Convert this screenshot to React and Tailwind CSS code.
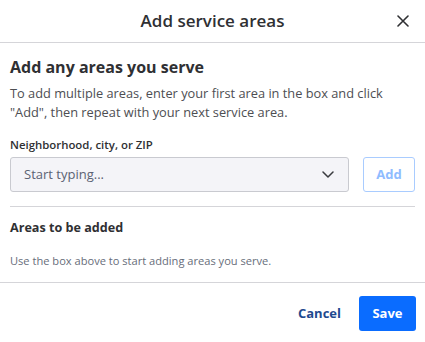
import React from "react";

export default function App() {
  return (
    <div className="w-[425px] h-[342px] bg-white text-[#2f3033] flex flex-col" style={{ fontFamily: '"Open Sans", sans-serif' }}>
      <div className="relative h-[43px] flex items-center justify-center border-b border-[#d5d5d9] shrink-0">
        <span className="text-[17px] font-semibold text-[#2f3033]">Add service areas</span>
        <button className="absolute right-[14px] top-[13px] w-[16px] h-[16px] flex items-center justify-center">
          <svg width="12" height="12" viewBox="0 0 12 12" fill="none" stroke="#2f3033" strokeWidth="1.6" strokeLinecap="round">
            <path d="M1 1L11 11M11 1L1 11" />
          </svg>
        </button>
      </div>
      <div className="px-[10px] pt-[13px] flex flex-col">
        <h2 className="text-[16px] font-bold leading-[22px] text-[#2f3033]">Add any areas you serve</h2>
        <p className="mt-[6px] text-[12.8px] leading-[19px] text-[#4d4e52]">
          To add multiple areas, enter your first area in the box and click "Add", then repeat with your next service area.
        </p>
        <label className="mt-[15px] text-[11.4px] font-semibold leading-[15px] text-[#2f3033]">Neighborhood, city, or ZIP</label>
        <div className="mt-[5px] flex items-center gap-[14px]">
          <div className="w-[340px] h-[35px] rounded-[3px] border border-[#c9cad0] bg-[#f4f4f8] flex items-center justify-between pl-[13px] pr-[14px]">
            <span className="text-[13px] text-[#5b6273]">Start typing...</span>
            <svg width="12" height="7" viewBox="0 0 12 7" fill="none" stroke="#3a3b3f" strokeWidth="1.5" strokeLinecap="round" strokeLinejoin="round">
              <path d="M1 1L6 6L11 1" />
            </svg>
          </div>
          <button className="w-[52px] h-[35px] rounded-[3px] border border-[#a9ccff] text-[13px] font-bold text-[#8fbcff] flex items-center justify-center">
            Add
          </button>
        </div>
        <div className="mt-[14px] border-t border-[#d5d5d9]" />
        <h3 className="mt-[13px] text-[12.6px] font-bold leading-[16px] text-[#2f3033]">Areas to be added</h3>
        <p className="mt-[17px] text-[11.1px] leading-[15px] text-[#676d7a]">Use the box above to start adding areas you serve.</p>
      </div>
      <div className="mt-[14px] border-t border-[#d5d5d9]" />
      <div className="flex items-center justify-end pr-[9px] pt-[13px] gap-[18px]">
        <button className="text-[13px] font-bold text-[#1f4a8f]">Cancel</button>
        <button className="w-[57px] h-[35px] rounded-[3px] bg-[#0a6cff] text-white text-[13px] font-bold">Save</button>
      </div>
    </div>
  );
}
